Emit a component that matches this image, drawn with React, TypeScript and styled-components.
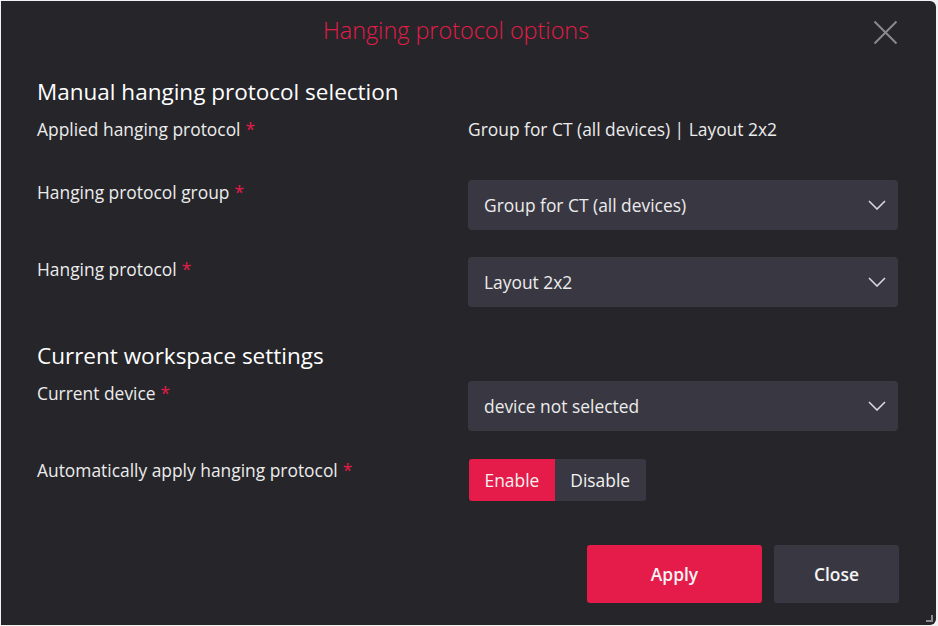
import React, { useState } from "react";
import styled, { createGlobalStyle } from "styled-components";

const GlobalStyle = createGlobalStyle`
  html, body {
    margin: 0;
    padding: 0;
    background: #f2f2f2;
    font-family: "Open Sans", "Noto Sans", sans-serif;
  }
  * { box-sizing: border-box; }
`;

const Dialog = styled.div`
  position: relative;
  margin: 1px;
  width: 935px;
  height: 624px;
  background: #26252a;
  border-radius: 0 6px 6px 0;
  color: #ececec;
  padding: 0 37px 0 36px;
  display: flex;
  flex-direction: column;
`;

const Header = styled.div`
  height: 58px;
  display: flex;
  align-items: center;
  justify-content: center;
  position: relative;
`;

const Title = styled.h1`
  margin: 0;
  font-size: 23.4px;
  font-weight: 300;
  color: #e31c48;
  line-height: 30px;
  transform: translateX(-12px);
`;

const CloseIcon = styled.button`
  position: absolute;
  right: 1px;
  top: 19px;
  width: 25px;
  height: 25px;
  padding: 0;
  border: none;
  background: none;
  cursor: pointer;
`;

const SectionTitle = styled.h2<{ $top: number }>`
  margin: ${(p) => p.$top}px 0 0;
  font-size: 22.5px;
  font-weight: 400;
  line-height: 30px;
  color: #ffffff;
`;

const Row = styled.div<{ $top: number }>`
  display: grid;
  grid-template-columns: 431px 1fr 1px;
  align-items: start;
  margin-top: ${(p) => p.$top}px;
`;

const Label = styled.div`
  font-size: 17.4px;
  line-height: 24px;
  color: #ececec;
`;

const Required = styled.span`
  color: #e31c48;
  margin-left: 5px;
`;

const Value = styled.div`
  font-size: 17.4px;
  line-height: 24px;
  color: #ececec;
`;

const Select = styled.div`
  height: 50px;
  background: #393842;
  border-radius: 4px;
  display: flex;
  align-items: center;
  justify-content: space-between;
  padding: 0 12px 0 16px;
  font-size: 17.4px;
  color: #ececec;
  cursor: pointer;
`;

const Toggle = styled.div`
  display: inline-flex;
  height: 42px;
  border-radius: 3px;
  overflow: hidden;
  justify-self: start;
  margin-top: 1px;
  margin-left: 1px;
`;

const ToggleButton = styled.button<{ $active: boolean }>`
  border: none;
  height: 100%;
  padding: 0 15.5px;
  font-family: inherit;
  font-size: 17.4px;
  color: #f2f2f2;
  background: ${(p) => (p.$active ? "#e51c4a" : "#393842")};
  cursor: pointer;
`;

const Footer = styled.div`
  display: flex;
  justify-content: flex-end;
  gap: 12px;
  margin-top: 44px;
`;

const ActionButton = styled.button<{ $primary?: boolean; $width: number }>`
  width: ${(p) => p.$width}px;
  height: 58px;
  border: none;
  border-radius: 3px;
  font-family: inherit;
  font-size: 17.4px;
  font-weight: 600;
  color: #f5f5f5;
  background: ${(p) => (p.$primary ? "#e51c4a" : "#393842")};
  cursor: pointer;
`;

const Grip = styled.div`
  position: absolute;
  right: 3px;
  bottom: 3px;
  width: 7px;
  height: 7px;
  border-right: 2px solid #8b8b8b;
  border-bottom: 2px solid #8b8b8b;
`;

const Chevron = () => (
  <svg width="18" height="10" viewBox="0 0 18 10" fill="none">
    <path d="M1 1l8 8 8-8" stroke="#d8d8dc" strokeWidth="1.6" />
  </svg>
);

const Field = ({ label, children, top }: { label: string; children: React.ReactNode; top: number }) => (
  <Row $top={top}>
    <Label>
      {label}
      <Required>*</Required>
    </Label>
    {children}
  </Row>
);

export default function App() {
  const [auto, setAuto] = useState(true);
  return (
    <>
      <GlobalStyle />
      <Dialog>
        <Header>
          <Title>Hanging protocol options</Title>
          <CloseIcon aria-label="Close">
            <svg width="25" height="25" viewBox="0 0 25 25">
              <path d="M1.5 1.5l22 22M23.5 1.5l-22 22" stroke="#8a8a8a" strokeWidth="2" />
            </svg>
          </CloseIcon>
        </Header>
        <SectionTitle $top={18}>Manual hanging protocol selection</SectionTitle>
        <Field label="Applied hanging protocol" top={10}>
          <Value>Group for CT (all devices) | Layout 2x2</Value>
        </Field>
        <Field label="Hanging protocol group" top={39}>
          <Select>
            Group for CT (all devices)
            <Chevron />
          </Select>
        </Field>
        <Field label="Hanging protocol" top={27}>
          <Select>
            Layout 2x2
            <Chevron />
          </Select>
        </Field>
        <SectionTitle $top={34}>Current workspace settings</SectionTitle>
        <Field label="Current device" top={10}>
          <Select>
            device not selected
            <Chevron />
          </Select>
        </Field>
        <Field label="Automatically apply hanging protocol" top={27}>
          <Toggle>
            <ToggleButton $active={auto} onClick={() => setAuto(true)}>
              Enable
            </ToggleButton>
            <ToggleButton $active={!auto} onClick={() => setAuto(false)}>
              Disable
            </ToggleButton>
          </Toggle>
        </Field>
        <Footer>
          <ActionButton $primary $width={175}>
            Apply
          </ActionButton>
          <ActionButton $width={125}>Close</ActionButton>
        </Footer>
        <Grip />
      </Dialog>
    </>
  );
}
